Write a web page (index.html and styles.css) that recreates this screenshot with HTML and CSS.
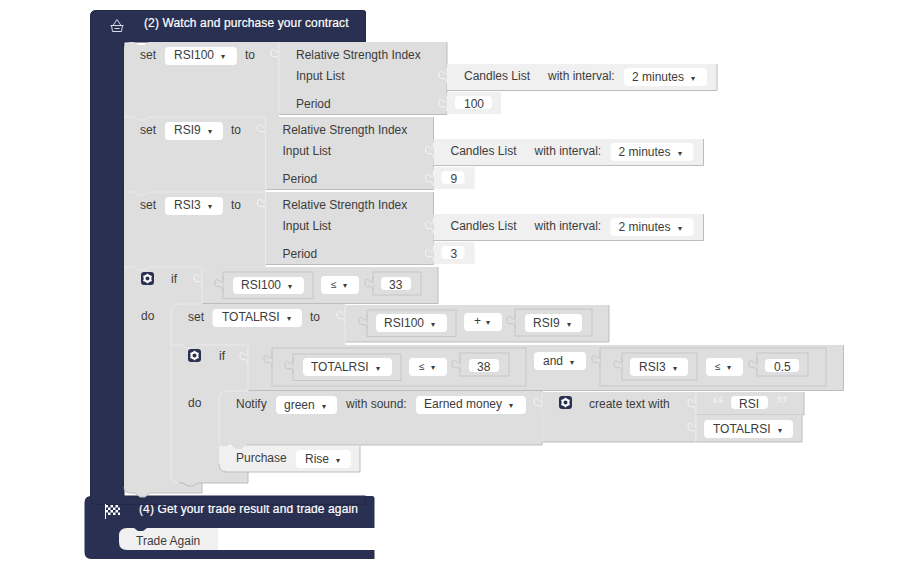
FILE: index.html
```html
<!DOCTYPE html>
<html lang="en">
<head>
    <meta charset="UTF-8">
    <title>Block workspace</title>
    <link rel="stylesheet" href="styles.css">
</head>
<body>
<svg class="workspace" width="913" height="579" viewBox="0 0 913 579" xmlns="http://www.w3.org/2000/svg">
    <defs>
        <!-- input tab, drawn from the block's left edge -->
        <path id="tab" d="M0 0 V3 C0 12 -8 -3 -8 7 C-8 15 0 6 0 15"/>
        <g id="gear">
            <rect width="13" height="13" rx="3" fill="#2a3052"/>
            <circle cx="6.5" cy="6.5" r="3" fill="none" stroke="#fff" stroke-width="2"/>
            <path d="M6.5 1.8V3.6M6.5 9.4V11.2M2.4 4.1L4 5M9 8L10.6 8.9M2.4 8.9L4 8M9 5L10.6 4.1" stroke="#fff" stroke-width="1.6"/>
        </g>
    </defs>

    <!-- (4) bottom block -->
    <path class="dark" d="M91 496 H372 Q374.500 496 374.500 498 V528 H218 V550 H374.500 V559 H91 Q84.500 559 84.500 552 V503 Q84.500 496 91 496 Z"/>
    <path class="light" d="M127 528 H134 L138 531 H143 L147 528 H218 V550 H127 Q119 550 119 542 V536 Q119 528 127 528 Z"/>
    <text class="title" x="139" y="513">(4) Get your trade result and trade again</text>
    <text class="lbl" x="136" y="545">Trade Again</text>

    <!-- (2) top block -->
    <path class="dark footline" d="M96 10.500 H363 Q365.500 10.500 365.500 12 V42 H124 V496 H365.500 V504.500 H96 Q90.500 504.500 90.500 498 V16 Q90.500 10.500 96 10.500 Z"/>
    <text class="title" x="144" y="27">(2) Watch and purchase your contract</text>
    <path class="ico" d="M110.500 25.500H123.500M111.500 25.500L112.500 31.500H121.500L122.500 25.500M113 25.500L117 19.500L121 25.500M114.500 28.500H119.500"/>
    <g transform="translate(105 504)">
        <path fill="#fff" d="M0 0H1V15H0Z"/>
        <path fill="#fff" d="M1 1H15V11H1Z"/>
        <path fill="#2a3052" d="M3 1H5.500V3.500H3ZM8 1H10.500V3.500H8ZM13 1H15V3.500H13ZM1 3.500H3V6H1ZM5.500 3.500H8V6H5.500ZM10.500 3.500H13V6H10.500ZM3 6H5.500V8.500H3ZM8 6H10.500V8.500H8ZM13 6H15V8.500H13ZM1 8.500H3V11H1ZM5.500 8.500H8V11H5.500ZM10.500 8.500H13V11H10.500Z"/>
    </g>

    <!-- set RSI100 -->
    <g>
        <path class="grey" d="M131 42 H134 L139 45 H144 L149 42 H279 V117 H124 V49 Q124 42 131 42 Z"/>
        <text class="lbl" x="140" y="59">set</text>
        <rect class="field" x="165" y="47" width="72" height="18" rx="4"/>
        <text class="lbl" x="174" y="59">RSI100 <tspan class="arr" dx="4">▾</tspan></text>
        <text class="lbl" x="245" y="59">to</text>
        <use class="tab" href="#tab" x="279" y="46"/>
        <rect class="grey" x="279" y="42" width="168" height="72.500"/>
        <path class="shade" d="M447 42 V114.500 H279"/>
        <path class="hi" d="M279 42 V114.500"/>
        <text class="lbl" x="296" y="59">Relative Strength Index</text>
        <text class="lbl" x="296" y="80">Input List</text>
        <text class="lbl" x="296" y="108">Period</text>
        <rect class="light" x="447" y="64" width="270" height="26.500"/>
        <path class="shade" d="M717 64 V90.500 H447"/>
        <use class="tab" href="#tab" x="447" y="68"/>
        <text class="lbl" x="464" y="80">Candles List</text>
        <text class="lbl" x="548" y="80">with interval:</text>
        <rect class="field" x="624" y="68" width="83" height="18" rx="4"/>
        <text class="lbl" x="632" y="81">2 minutes <tspan class="arr" dx="4">▾</tspan></text>
        <rect class="light" x="447" y="92" width="54" height="22"/>
        <use class="tab" href="#tab" x="447" y="96"/>
        <rect class="field" x="455" y="96" width="37" height="13" rx="4"/>
        <text class="lbl" x="464" y="108">100</text>
    </g>

    <!-- set RSI9 -->
    <g>
        <rect class="grey" x="124" y="117" width="141.500" height="75"/>
        <path class="hi" d="M124 117 H134 L139 120 H144 L149 117 H265"/>
        <text class="lbl" x="140" y="134">set</text>
        <rect class="field" x="165" y="122" width="58" height="18" rx="4"/>
        <text class="lbl" x="174" y="134">RSI9 <tspan class="arr" dx="4">▾</tspan></text>
        <text class="lbl" x="231" y="134">to</text>
    </g>
    <g transform="translate(-13.500 75)">
        <use class="tab" href="#tab" x="279" y="46"/>
        <rect class="grey" x="279" y="42" width="168" height="72.500"/>
        <path class="shade" d="M447 42 V114.500 H279"/>
        <path class="hi" d="M279 42 V114.500"/>
        <text class="lbl" x="296" y="59">Relative Strength Index</text>
        <text class="lbl" x="296" y="80">Input List</text>
        <text class="lbl" x="296" y="108">Period</text>
        <rect class="light" x="447" y="64" width="270" height="26.500"/>
        <path class="shade" d="M717 64 V90.500 H447"/>
        <use class="tab" href="#tab" x="447" y="68"/>
        <text class="lbl" x="464" y="80">Candles List</text>
        <text class="lbl" x="548" y="80">with interval:</text>
        <rect class="field" x="624" y="68" width="83" height="18" rx="4"/>
        <text class="lbl" x="632" y="81">2 minutes <tspan class="arr" dx="4">▾</tspan></text>
        <rect class="light" x="447" y="92" width="41" height="22"/>
        <use class="tab" href="#tab" x="447" y="96"/>
        <rect class="field" x="455" y="96" width="23" height="13" rx="4"/>
        <text class="lbl" x="464" y="108">9</text>
    </g>

    <!-- set RSI3 -->
    <g>
        <rect class="grey" x="124" y="192" width="141.500" height="75"/>
        <path class="hi" d="M124 192 H134 L139 195 H144 L149 192 H265"/>
        <text class="lbl" x="140" y="209">set</text>
        <rect class="field" x="165" y="197" width="58" height="18" rx="4"/>
        <text class="lbl" x="174" y="209">RSI3 <tspan class="arr" dx="4">▾</tspan></text>
        <text class="lbl" x="231" y="209">to</text>
    </g>
    <g transform="translate(-13.500 150)">
        <use class="tab" href="#tab" x="279" y="46"/>
        <rect class="grey" x="279" y="42" width="168" height="72.500"/>
        <path class="shade" d="M447 42 V114.500 H279"/>
        <path class="hi" d="M279 42 V114.500"/>
        <text class="lbl" x="296" y="59">Relative Strength Index</text>
        <text class="lbl" x="296" y="80">Input List</text>
        <text class="lbl" x="296" y="108">Period</text>
        <rect class="light" x="447" y="64" width="270" height="26.500"/>
        <path class="shade" d="M717 64 V90.500 H447"/>
        <use class="tab" href="#tab" x="447" y="68"/>
        <text class="lbl" x="464" y="80">Candles List</text>
        <text class="lbl" x="548" y="80">with interval:</text>
        <rect class="field" x="624" y="68" width="83" height="18" rx="4"/>
        <text class="lbl" x="632" y="81">2 minutes <tspan class="arr" dx="4">▾</tspan></text>
        <rect class="light" x="447" y="92" width="41" height="22"/>
        <use class="tab" href="#tab" x="447" y="96"/>
        <rect class="field" x="455" y="96" width="23" height="13" rx="4"/>
        <text class="lbl" x="464" y="108">3</text>
    </g>

    <!-- outer if -->
    <path class="grey" d="M124 267 H202 V493 H150 L145 497 H140 L135 493 H130 Q124 493 124 487 Z"/>
    <path class="hi" d="M124 267 H134 L139 270 H144 L149 267 H202"/>
    <path class="shade" d="M202 483 V493 H150 L145 497 H140 L135 493 H130 Q124 493 124 487"/>
    <use href="#gear" x="141" y="272"/>
    <text class="lbl" x="171" y="283">if</text>
    <text class="lbl" x="141" y="320">do</text>
    <use class="tab" href="#tab" x="202" y="271"/>
    <rect class="grey" x="202" y="267" width="236" height="36.500"/>
    <path class="shade" d="M438 267 V303.500 H202"/>
    <path class="hi" d="M202 267 V303.500"/>
    <rect class="box" x="223" y="272" width="90" height="26.500"/>
    <use class="tab nested" href="#tab" x="223" y="276"/>
    <rect class="field" x="233" y="277" width="71" height="17" rx="4"/>
    <text class="lbl" x="241" y="289">RSI100 <tspan class="arr" dx="4">▾</tspan></text>
    <rect class="field" x="321" y="276" width="38" height="18" rx="4"/>
    <text class="lbl" x="331" y="288"><tspan class="op">≤</tspan> <tspan class="arr" dx="3">▾</tspan></text>
    <rect class="box" x="373" y="272" width="48" height="23"/>
    <use class="tab nested" href="#tab" x="373" y="276"/>
    <rect class="field" x="381" y="277" width="30" height="13" rx="4"/>
    <text class="lbl" x="389" y="289">33</text>

    <!-- inner statement: set TOTALRSI -->
    <path class="grey" d="M179 304 H181 L186 307 H191 L196 304 H345 V345 H171 V312 Q171 304 179 304 Z"/>
    <path class="hi" d="M171 344 V312 Q171 304 179 304 H202"/>
    <text class="lbl" x="188" y="321">set</text>
    <rect class="field" x="212.500" y="309" width="89.500" height="18" rx="4"/>
    <text class="lbl" x="222" y="321">TOTALRSI <tspan class="arr" dx="4">▾</tspan></text>
    <text class="lbl" x="310" y="321">to</text>
    <use class="tab" href="#tab" x="345" y="308"/>
    <rect class="grey" x="345" y="305" width="264" height="37"/>
    <path class="shade" d="M609 305 V342 H345"/>
    <path class="hi" d="M345 305 V342"/>
    <rect class="box" x="367" y="310" width="89" height="26.500"/>
    <use class="tab nested" href="#tab" x="367" y="314"/>
    <rect class="field" x="376" y="314" width="71" height="18" rx="4"/>
    <text class="lbl" x="384" y="327">RSI100 <tspan class="arr" dx="4">▾</tspan></text>
    <rect class="field" x="464" y="313" width="38" height="18" rx="4"/>
    <text class="lbl" x="474" y="325">+ <tspan class="arr" dx="2">▾</tspan></text>
    <rect class="box" x="515" y="309" width="77" height="27"/>
    <use class="tab nested" href="#tab" x="515" y="313"/>
    <rect class="field" x="525" y="314" width="57" height="18" rx="4"/>
    <text class="lbl" x="533" y="327">RSI9 <tspan class="arr" dx="4">▾</tspan></text>

    <!-- inner if -->
    <path class="grey" d="M171 345 H248 V400 H228 V472 H248 V483 H198 L193 486 H188 L183 483 H179 Q171 483 171 475 Z"/>
    <path class="hi" d="M171 345 H181 L186 348 H191 L196 345 H248"/>
    <path class="hi" d="M171 344 V475 Q171 483 179 483"/>
    <path class="shade" d="M248 472 V483 H198 L193 486 H188 L183 483 H179"/>
    <use href="#gear" x="188" y="349"/>
    <text class="lbl" x="219" y="360">if</text>
    <text class="lbl" x="188" y="407">do</text>
    <use class="tab" href="#tab" x="248" y="349"/>
    <rect class="grey" x="248" y="345" width="595.500" height="45.500"/>
    <path class="shade" d="M843.500 345 V390.500 H248"/>
    <path class="hi" d="M248 345 V390.500"/>
    <rect class="box" x="272" y="348" width="254" height="38"/>
    <use class="tab nested" href="#tab" x="272" y="352"/>
    <rect class="box" x="293" y="354" width="108" height="26.500"/>
    <use class="tab nested" href="#tab" x="293" y="358"/>
    <rect class="field" x="303" y="358" width="89" height="18" rx="4"/>
    <text class="lbl" x="311" y="371">TOTALRSI <tspan class="arr" dx="4">▾</tspan></text>
    <rect class="field" x="409" y="358" width="38" height="18" rx="4"/>
    <text class="lbl" x="419" y="370"><tspan class="op">≤</tspan> <tspan class="arr" dx="3">▾</tspan></text>
    <rect class="box" x="460" y="353" width="49" height="23"/>
    <use class="tab nested" href="#tab" x="460" y="357"/>
    <rect class="field" x="469" y="359" width="30" height="13" rx="4"/>
    <text class="lbl" x="477" y="371">38</text>
    <rect class="field" x="534" y="352" width="52" height="18" rx="4"/>
    <text class="lbl" x="543" y="365">and <tspan class="arr" dx="4">▾</tspan></text>
    <rect class="box" x="600" y="348" width="226" height="38"/>
    <use class="tab nested" href="#tab" x="600" y="352"/>
    <rect class="box" x="622" y="353" width="75" height="27"/>
    <use class="tab nested" href="#tab" x="622" y="357"/>
    <rect class="field" x="630" y="358" width="58" height="18" rx="4"/>
    <text class="lbl" x="639" y="371">RSI3 <tspan class="arr" dx="4">▾</tspan></text>
    <rect class="field" x="706" y="358" width="37" height="18" rx="4"/>
    <text class="lbl" x="715" y="370"><tspan class="op">≤</tspan> <tspan class="arr" dx="3">▾</tspan></text>
    <rect class="box" x="757" y="353" width="51" height="23"/>
    <use class="tab nested" href="#tab" x="757" y="357"/>
    <rect class="field" x="765" y="359" width="34" height="13" rx="4"/>
    <text class="lbl" x="774" y="371">0.5</text>

    <!-- purchase, sits under the notify tab -->
    <path class="light" d="M219 446 H360 V472 H227 Q219 472 219 464 Z"/>
    <path class="shade" d="M360 446 V472 H227 Q219 472 219 464"/>
    <text class="lbl" x="236" y="462">Purchase</text>
    <rect class="field" x="296" y="450" width="55" height="18" rx="4"/>
    <text class="lbl" x="305" y="463">Rise <tspan class="arr" dx="4">▾</tspan></text>

    <!-- notify -->
    <path class="grey" d="M227 391 H229 L234 394 H239 L244 391 H542 V445 H246 L241 449 H236 L231 445 H219 V399 Q219 391 227 391 Z"/>
    <path class="hi" d="M219 445 V399 Q219 391 227 391 H248"/>
    <path class="shade" d="M542 391 V445 H246"/>
    <text class="lbl" x="236" y="408">Notify</text>
    <rect class="field" x="276" y="396" width="61" height="18" rx="4"/>
    <text class="lbl" x="284" y="409">green <tspan class="arr" dx="4">▾</tspan></text>
    <text class="lbl" x="346" y="408">with sound:</text>
    <rect class="field" x="416" y="396" width="110" height="18" rx="4"/>
    <text class="lbl" x="424" y="408">Earned money <tspan class="arr" dx="4">▾</tspan></text>
    <use class="tab" href="#tab" x="542" y="395"/>

    <!-- create text with -->
    <rect class="grey" x="542" y="392" width="154" height="50"/>
    <path class="shade" d="M696 442 H542"/>
    <path class="hi" d="M542 392 V442"/>
    <use href="#gear" x="559" y="396"/>
    <text class="lbl" x="589" y="408">create text with</text>
    <use class="tab" href="#tab" x="696" y="396"/>
    <use class="tab" href="#tab" x="696" y="420"/>
    <rect class="grey" x="696" y="392" width="108" height="23"/>
    <path class="shade" d="M804 392 V415 H696"/>
    <path class="hi" d="M696 392 V442"/>
    <text class="quote" x="712" y="411">“</text>
    <rect class="field" x="731" y="396" width="37" height="13" rx="4"/>
    <text class="lbl" x="739" y="408">RSI</text>
    <text class="quote" x="776" y="411">”</text>
    <rect class="grey" x="696" y="416" width="106" height="26"/>
    <path class="shade" d="M802 416 V442 H696"/>
    <path class="hi" d="M696 416 V442"/>
    <rect class="field" x="704" y="420" width="89" height="18" rx="4"/>
    <text class="lbl" x="713" y="433">TOTALRSI <tspan class="arr" dx="4">▾</tspan></text>
</svg>
</body>
</html>
```

FILE: styles.css
```css
/* Page */
body {
    margin: 0;
    background-color: #FFFFFF;
    overflow: hidden;
}

.workspace {
    display: block;
    font-family: "Liberation Sans", Arial, sans-serif;
    font-size: 12px;
}

/* Block bodies */
.dark {
    fill: #2a3052;
}

.footline {
    stroke: #222847;
    stroke-width: 1;
}

.grey {
    fill: #dedede;
}

.light {
    fill: #f0f0f0;
}

/* Inputs nested in a block, only their outline shows */
.box {
    fill: #dedede;
    stroke: #c6c6c6;
    stroke-width: 1;
}

.field {
    fill: #FFFFFF;
}

/* Block edges */
.shade {
    fill: none;
    stroke: #bdbdbd;
    stroke-width: 1;
}

.hi {
    fill: none;
    stroke: #eaeaea;
    stroke-width: 1;
}

.tab {
    fill: #dedede;
    stroke: #f6f6f6;
    stroke-width: 1;
}

.tab.nested {
    stroke: #c6c6c6;
}

/* Text */
.lbl {
    fill: #3c3c3c;
}

.title {
    fill: #FFFFFF;
    stroke: #FFFFFF;
    stroke-width: 0.2;
    letter-spacing: 0.12px;
}

.arr {
    font-size: 8px;
}

.op {
    font-size: 10px;
}

.quote {
    fill: #ececec;
    font-family: "Liberation Serif", serif;
    font-size: 24px;
    font-weight: bold;
}

.ico {
    fill: none;
    stroke: #d8dae4;
    stroke-width: 1;
}
```
